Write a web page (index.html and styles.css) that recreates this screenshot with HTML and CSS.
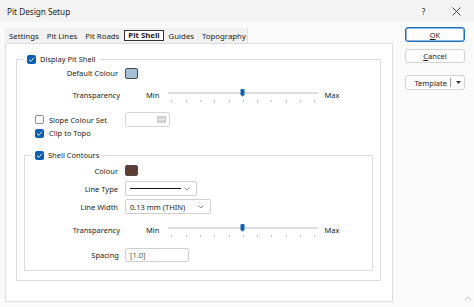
FILE: index.html
```html
<!DOCTYPE html>
<html lang="en">
<head>
    <meta charset="UTF-8">
    <meta name="viewport" content="width=device-width, initial-scale=1.0">
    <title>Pit Design Setup</title>
    <link rel="stylesheet" href="styles.css">
</head>
<body>
    <div class="window">
        <div class="titlebar">
            <span class="title">Pit Design Setup</span>
            <div class="caption">
                <span class="help">?</span>
                <span class="close">
                    <svg width="9" height="9" viewBox="0 0 9 9"><path d="M0.5 0.5 L8.5 8.5 M8.5 0.5 L0.5 8.5" stroke="#333" stroke-width="0.9"/></svg>
                </span>
            </div>
        </div>

        <div class="main">
            <div class="left">
                <div class="tabs">
                    <span class="tab">Settings</span>
                    <span class="tab">Pit Lines</span>
                    <span class="tab">Pit Roads</span>
                    <span class="tab active"><span>Pit Shell</span></span>
                    <span class="tab">Guides</span>
                    <span class="tab">Topography</span>
                </div>

                <div class="panel">
                    <fieldset class="group outer">
                        <legend><span class="check on"></span>Display Pit Shell</legend>

                        <div class="row r-colour">
                            <label>Default Colour</label>
                            <span class="swatch blue"></span>
                        </div>

                        <div class="row r-trans">
                            <label>Transparency</label>
                            <div class="range">
                                <span>Min</span>
                                <div class="slider">
                                    <div class="track"></div>
                                    <div class="ticks"><i></i><i></i><i></i><i></i><i></i><i></i><i></i><i></i><i></i><i></i><i></i></div>
                                    <svg class="thumb" width="5" height="8" viewBox="0 0 5 8"><path d="M0.5 1.2 Q0.5 0 1.6 0 H3.4 Q4.5 0 4.5 1.2 V5.6 L2.5 7.8 L0.5 5.6 Z" fill="#0b64b8"/></svg>
                                </div>
                                <span>Max</span>
                            </div>
                        </div>

                        <div class="row r-slope">
                            <span class="opt"><span class="check"></span>Slope Colour Set</span>
                            <span class="field slope">
                                <svg width="9" height="7" viewBox="0 0 9 7"><rect x="0" y="0" width="9" height="7" rx="1" fill="#c9c9c9"/><path d="M3 0.5 V6.5 M6 0.5 V6.5 M0.5 3.5 H8.5" stroke="#f2f2f2" stroke-width="0.8"/></svg>
                            </span>
                        </div>

                        <div class="row r-clip">
                            <span class="opt"><span class="check on"></span>Clip to Topo</span>
                        </div>

                        <fieldset class="group inner">
                            <legend><span class="check on"></span>Shell Contours</legend>

                            <div class="row r-icolour">
                                <label>Colour</label>
                                <span class="swatch brown"></span>
                            </div>

                            <div class="row r-ltype">
                                <label>Line Type</label>
                                <span class="field select ltype">
                                    <span class="line"></span>
                                    <svg width="6" height="4" viewBox="0 0 6 4"><path d="M0.5 0.5 L3 3 L5.5 0.5" fill="none" stroke="#777" stroke-width="0.8"/></svg>
                                </span>
                            </div>

                            <div class="row r-lwidth">
                                <label>Line Width</label>
                                <span class="field select lwidth">
                                    <span class="value">0.13 mm (THIN)</span>
                                    <svg width="6" height="4" viewBox="0 0 6 4"><path d="M0.5 0.5 L3 3 L5.5 0.5" fill="none" stroke="#777" stroke-width="0.8"/></svg>
                                </span>
                            </div>

                            <div class="row r-itrans">
                                <label>Transparency</label>
                                <div class="range">
                                    <span>Min</span>
                                    <div class="slider">
                                        <div class="track"></div>
                                        <div class="ticks"><i></i><i></i><i></i><i></i><i></i><i></i><i></i><i></i><i></i><i></i><i></i></div>
                                        <svg class="thumb" width="5" height="8" viewBox="0 0 5 8"><path d="M0.5 1.2 Q0.5 0 1.6 0 H3.4 Q4.5 0 4.5 1.2 V5.6 L2.5 7.8 L0.5 5.6 Z" fill="#0b64b8"/></svg>
                                    </div>
                                    <span>Max</span>
                                </div>
                            </div>

                            <div class="row r-spacing">
                                <label>Spacing</label>
                                <span class="field spacing">[1.0]</span>
                            </div>
                        </fieldset>
                    </fieldset>
                </div>
            </div>

            <div class="side">
                <button class="btn ok"><u>O</u>K</button>
                <button class="btn cancel"><u>C</u>ancel</button>
                <button class="btn template">
                    <span class="label">Template</span>
                    <span class="divider"></span>
                    <svg class="arrow" width="5" height="3" viewBox="0 0 5 3"><path d="M0 0 H5 L2.5 3 Z" fill="#333"/></svg>
                </button>
            </div>
        </div>

        <svg class="grip" width="8" height="5" viewBox="0 0 8 5"><path d="M0.5 4.5 L4 1 L7.5 4.5" fill="none" stroke="#b8b8b8" stroke-width="0.8"/></svg>
    </div>
</body>
</html>
```

FILE: styles.css
```css
body {
    margin: 0;
    width: 474px;
    height: 307px;
    overflow: hidden;
    background: #fafafa;
    font-family: 'Noto Sans', 'Open Sans', sans-serif;
    font-size: 7.5px;
    color: #1b1b1b;
}

.window {
    position: relative;
    height: 307px;
}

.titlebar {
    height: 22px;
    display: flex;
    align-items: center;
    padding-left: 7px;
    background: #f3f3f3;
    font-size: 8.2px;
}

.title {
    flex: 1;
}

.caption {
    display: flex;
    align-items: center;
    padding-right: 1px;
}

.caption span {
    width: 33px;
    display: flex;
    justify-content: center;
    align-items: center;
}

.help {
    font-size: 8px;
}

.main {
    display: flex;
    padding: 5px 0 0 5px;
}

.left {
    width: 388px;
}

/* tab strip */
.tabs {
    display: flex;
    margin-top: 1px;
    height: 15px;
    width: 242px;
    background: #f1f1f1;
    border-right: 1px solid #dedede;
    font-size: 7.8px;
}

.tab {
    display: flex;
    align-items: center;
    padding: 0 4px;
    white-space: nowrap;
}

.tab.active {
    padding: 0 1px;
}

.tab.active span {
    display: block;
    font-weight: bold;
    line-height: 9px;
    padding: 0 3px;
    background: #fff;
    border: 1px solid #333;
}

.panel {
    height: 248px;
    padding: 9px 11px 0 10px;
    background: #fff;
    border: 1px solid #dcdcdc;
}

/* group boxes */
.group {
    margin: 0;
    min-width: 0;
    border: 1px solid #dcdcdc;
}

.group legend {
    display: flex;
    align-items: center;
    gap: 4px;
    height: 12px;
    margin-left: 7px;
    padding: 0 3px;
}

.outer {
    padding: 2px 0 9px 0;
}

.inner {
    margin: 11px 7px 0 7px;
    padding: 4px 0 8px 0;
}

.row {
    display: grid;
    grid-template-columns: 101px auto;
    column-gap: 7px;
    align-items: center;
}

.inner .row {
    grid-template-columns: 93px auto;
}

.row label {
    text-align: right;
}

.r-colour { height: 12px; }
.r-trans { height: 14px; margin-top: 9px; }
.r-slope { height: 15px; margin-top: 10px; }
.r-clip { height: 10px; margin-top: 1px; }

.r-icolour { height: 11px; }
.r-ltype { height: 15px; margin-top: 5px; }
.r-lwidth { height: 15px; margin-top: 3px; }
.r-itrans { height: 14px; margin-top: 9px; }
.r-spacing { height: 15px; margin-top: 10px; }

.r-trans label,
.r-itrans label {
    margin-right: -2px;
}

.r-spacing label {
    margin-right: -1px;
}

.opt {
    display: flex;
    align-items: center;
    gap: 5px;
    padding-left: 18px;
}

/* checkboxes */
.check {
    width: 9px;
    height: 9px;
    box-sizing: border-box;
    border-radius: 2px;
    border: 1px solid #8c8c8c;
    background: #fdfdfd;
    flex: none;
}

.check.on {
    border: none;
    background: #0a5fb4 url("data:image/svg+xml,%3Csvg xmlns='http://www.w3.org/2000/svg' width='9' height='9' viewBox='0 0 9 9'%3E%3Cpath d='M2 4.6 L3.8 6.3 L7 2.8' fill='none' stroke='white' stroke-width='1'/%3E%3C/svg%3E") no-repeat center;
}

.swatch {
    width: 13px;
    height: 11px;
    box-sizing: border-box;
    border: 1px solid #4a4a4a;
    border-radius: 2px;
}

.swatch.blue {
    background: #a6c0d6;
}

.swatch.brown {
    background: #5c3d31;
}

/* slider */
.range {
    display: flex;
    align-items: center;
    padding-left: 21px;
}

.slider {
    position: relative;
    width: 150px;
    height: 14px;
    margin: 0 6px 0 9px;
}

.track {
    margin-top: 4px;
    height: 2px;
    background: #dedede;
}

.ticks {
    display: flex;
    justify-content: space-between;
    padding: 0 3px;
    margin-top: 6px;
}

.ticks i {
    width: 1px;
    height: 2px;
    background: #c4c4c4;
}

.thumb {
    position: absolute;
    left: 72px;
    top: 1px;
}

/* inputs */
.field {
    display: flex;
    align-items: center;
    box-sizing: border-box;
    height: 15px;
    border: 1px solid #cfcfcf;
    border-radius: 2px;
    background: #fff;
}

.slope {
    width: 45px;
    justify-content: flex-end;
    padding-right: 3px;
    border-color: #d6d6d6;
}

.select {
    justify-content: space-between;
    padding: 0 6px 0 4px;
}

.ltype {
    width: 72px;
}

.ltype .line {
    width: 51px;
    height: 1px;
    background: #111;
}

.lwidth {
    width: 86px;
}

.spacing {
    width: 64px;
    height: 14px;
    padding-left: 4px;
    color: #555;
}

/* right side buttons */
.side {
    display: flex;
    flex-direction: column;
    margin-left: 12px;
}

.btn {
    width: 60px;
    height: 15px;
    padding: 0;
    font-family: inherit;
    font-size: 7.5px;
    color: #1b1b1b;
    background: #fdfdfd;
    border: 1px solid #d3d3d3;
    border-radius: 3px;
    display: flex;
    align-items: center;
    justify-content: center;
    box-sizing: border-box;
}

.btn.ok {
    border-color: #1d6fc0;
    box-shadow: inset 0 0 0 0.5px #1d6fc0;
}

.btn.cancel {
    margin-top: 7px;
    height: 14px;
}

.btn.template {
    margin-top: 12px;
    justify-content: flex-end;
    padding-right: 3px;
}

.template .label {
    white-space: nowrap;
}

.template .divider {
    flex: none;
    width: 1px;
    height: 9px;
    background: #9a9a9a;
    margin: 0 5px 0 3px;
}

.template .arrow {
    flex: none;
}

/* resize grip in the window corner */
.grip {
    position: absolute;
    right: 2px;
    bottom: 6px;
}
```
